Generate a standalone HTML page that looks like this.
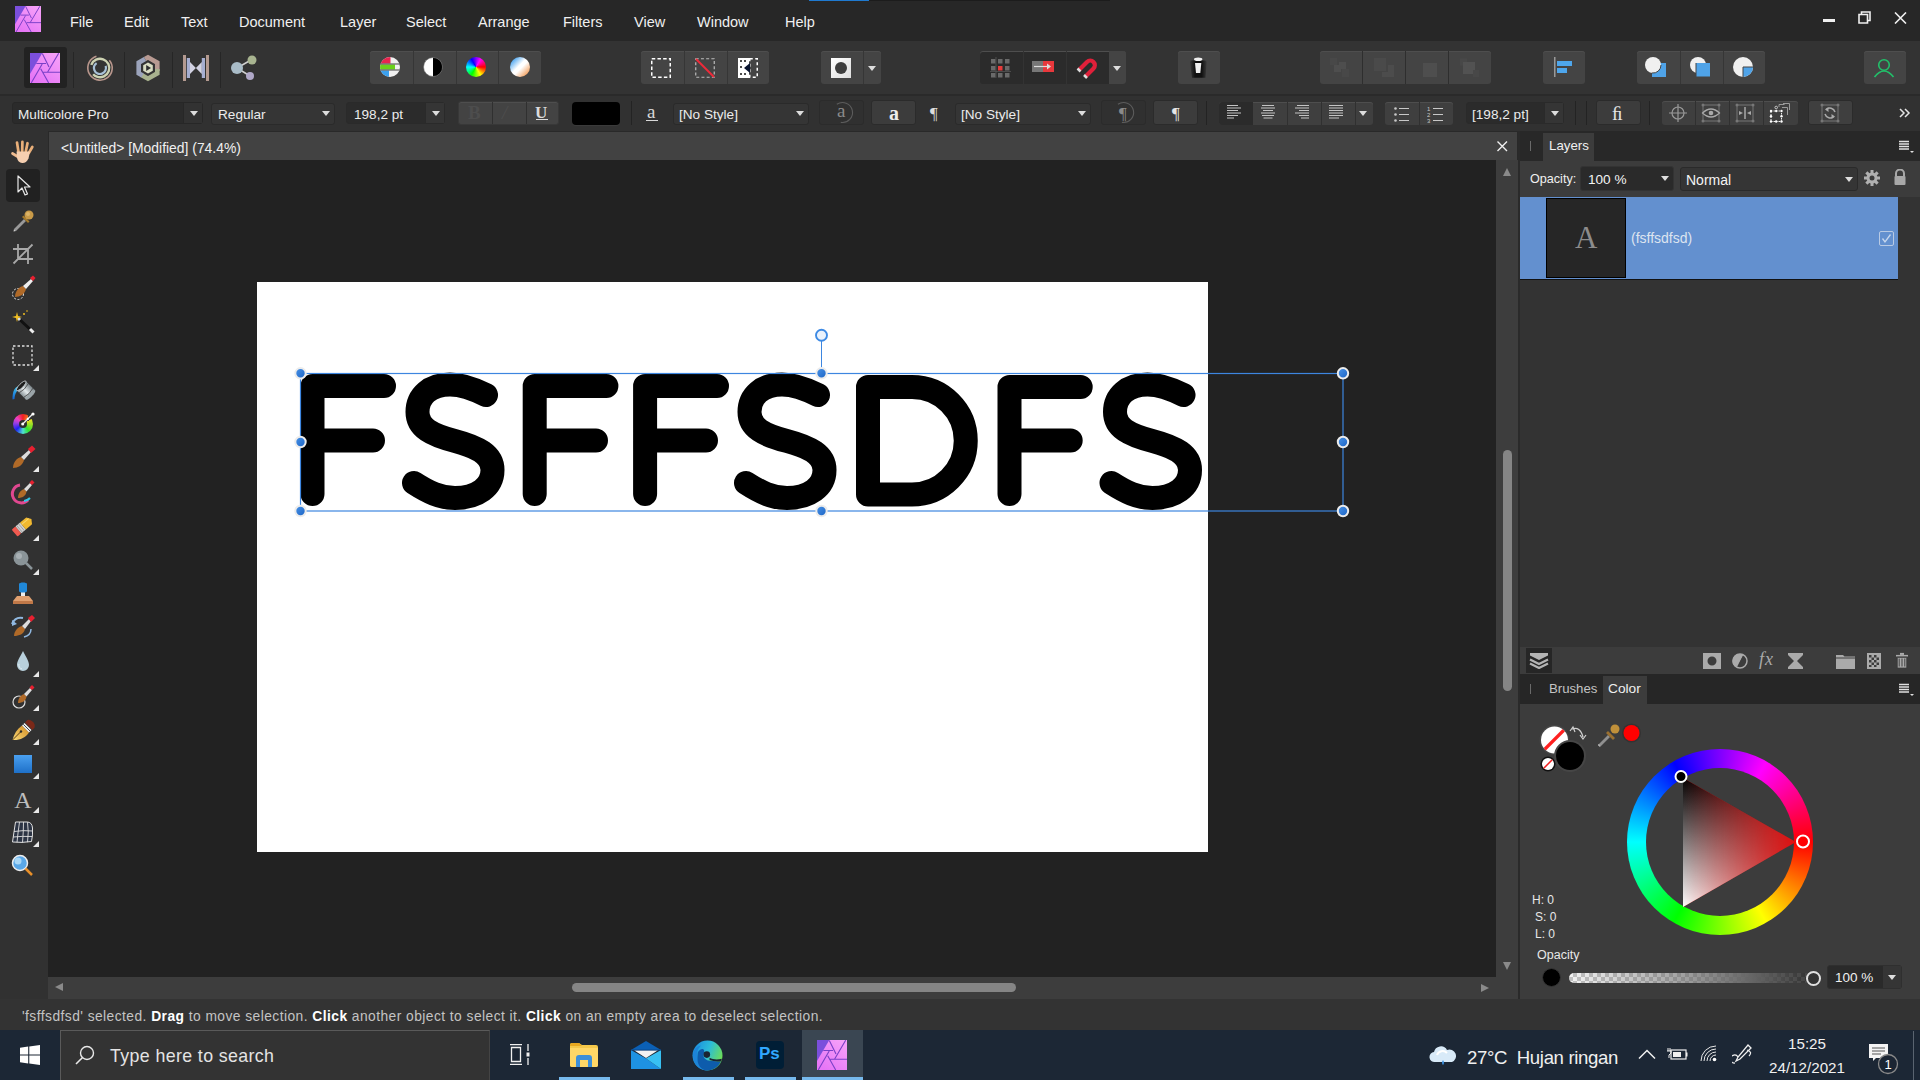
<!DOCTYPE html>
<html><head><meta charset="utf-8">
<style>
*{margin:0;padding:0;box-sizing:border-box}
html,body{width:1920px;height:1080px;overflow:hidden;background:#222;font-family:"Liberation Sans",sans-serif;color:#ddd}
.a{position:absolute}
.t{position:absolute;white-space:nowrap}
#menubar{left:0;top:0;width:1920px;height:41px;background:#272727}
#menubar .m{position:absolute;top:14px;font-size:14.5px;color:#f0f0f0}
#tb{left:0;top:41px;width:1920px;height:54px;background:#333}
#tbline{left:0;top:94px;width:1920px;height:2px;background:#2a2a2a}
#ctx{left:0;top:96px;width:1920px;height:36px;background:#313131}
#tools{left:0;top:124px;width:48px;height:875px;background:#313131}
#doctab{left:48px;top:131px;width:1470px;height:30px;background:#424242;border:1px solid #292929;border-bottom:none}
#canvas{left:48px;top:160px;width:1448px;height:817px;background:#222}
#page{left:257px;top:282px;width:951px;height:570px;background:#fff}
#vscroll{left:1496px;top:160px;width:22px;height:839px;background:#3d3d3d}
#hscroll{left:48px;top:977px;width:1470px;height:22px;background:#3d3d3d}
#status{left:0;top:999px;width:1920px;height:31px;background:#333}
#taskbar{left:0;top:1030px;width:1920px;height:50px;background:#1c2735}
#rpanel{left:1518px;top:131px;width:402px;height:868px;background:#2a2a2a}
.grp{position:absolute;background:#444;border-radius:3px;overflow:hidden;box-shadow:inset 0 1px 0 #4e4e4e}
.grp .b{position:absolute;top:0;height:100%;border-left:1px solid #363636}
.cb{position:absolute;background:#282828;border:1px solid #262626;border-radius:3px;font-size:13px;color:#e8e8e8}
.cb .dd{position:absolute;top:0;right:0;height:100%;border-left:1px solid #3a3a3a}
.arr{position:absolute;width:0;height:0;border-left:4px solid transparent;border-right:4px solid transparent;border-top:5px solid #ddd}
</style></head><body>

<!-- MENU BAR -->
<div id="menubar" class="a">
  <div class="m" style="left:70px">File</div>
  <div class="m" style="left:124px">Edit</div>
  <div class="m" style="left:181px">Text</div>
  <div class="m" style="left:239px">Document</div>
  <div class="m" style="left:340px">Layer</div>
  <div class="m" style="left:406px">Select</div>
  <div class="m" style="left:478px">Arrange</div>
  <div class="m" style="left:563px">Filters</div>
  <div class="m" style="left:634px">View</div>
  <div class="m" style="left:697px">Window</div>
  <div class="m" style="left:785px">Help</div>
</div>

<div id="tb" class="a"></div>
<div id="tbline" class="a"></div>
<!-- ROW 2 TOOLBAR -->
<div class="a" style="left:24px;top:47px;width:43px;height:41px;background:#222;border-radius:3px"></div>
<svg class="a" style="left:15px;top:6px" width="26" height="26" viewBox="0 0 30 30"><defs><linearGradient id="lg1" x1="1" y1="0" x2="0.3" y2="1"><stop offset="0" stop-color="#f7a4f9"/><stop offset="1" stop-color="#e676f6"/></linearGradient></defs><rect width="30" height="30" fill="url(#lg1)"/><path d="M0 0H12.3L0 21Z" fill="#7b4fdc"/><path d="M12.3 0.5L19 14M28.7 0.2L17.5 19.2M6.3 10.5H16M12.2 11L1.2 30M10.7 15.8L18.7 30M13.3 19.2H30" stroke="#7a40c8" stroke-width="1.1" fill="none"/></svg>
<svg class="a" style="left:30px;top:53px" width="30" height="30" viewBox="0 0 30 30"><rect width="30" height="30" fill="url(#lg1)"/><path d="M0 0H12.3L0 21Z" fill="#7b4fdc"/><path d="M12.3 0.5L19 14M28.7 0.2L17.5 19.2M6.3 10.5H16M12.2 11L1.2 30M10.7 15.8L18.7 30M13.3 19.2H30" stroke="#7a40c8" stroke-width="1.1" fill="none"/></svg>
<div class="a" style="left:73px;top:52px;width:1px;height:36px;background:#262626"></div>
<div class="a" style="left:124px;top:52px;width:1px;height:36px;background:#262626"></div>
<div class="a" style="left:172px;top:52px;width:1px;height:36px;background:#262626"></div>
<div class="a" style="left:220px;top:52px;width:1px;height:36px;background:#262626"></div>
<svg class="a" style="left:86px;top:54px" width="28" height="28" viewBox="0 0 28 28"><circle cx="14" cy="14" r="12.2" fill="none" stroke="#b8968c" stroke-width="1.6" stroke-dasharray="62 15" transform="rotate(-40 14 14)"/><circle cx="14" cy="14" r="9.3" fill="none" stroke="#cdd2b2" stroke-width="2.4" stroke-dasharray="48 10" transform="rotate(200 14 14)"/><circle cx="14" cy="14" r="6" fill="none" stroke="#a8c0d6" stroke-width="2.2" stroke-dasharray="26 12" transform="rotate(-20 14 14)"/></svg>
<svg class="a" style="left:134px;top:54px" width="28" height="28" viewBox="-14 -14 28 28"><g fill="none" stroke-width="4.6" stroke-linejoin="miter"><path d="M-3 -9L0 -10.7L9.3 -5.35V3" stroke="#b89a92"/><path d="M9.3 1V5.35L0 10.7L-7 6.7" stroke="#a8b28e"/><path d="M-5.5 7.6L-9.3 5.35V-5.35L-3 -9" stroke="#9ba3bb"/></g><path d="M0 -5.5L4.8 -2.75V2.75L0 5.5L-4.8 2.75V-2.75Z" fill="#d8dcc2"/><path d="M-1.8 -3L3 0L-1.8 3Z" fill="#2e2e2e"/></svg>
<svg class="a" style="left:183px;top:55px" width="26" height="26" viewBox="0 0 26 26"><rect x="0" y="0" width="3" height="26" fill="#b49a90"/><rect x="23" y="0" width="3" height="26" fill="#b49a90"/><rect x="3.8" y="3" width="3.2" height="20" fill="#a6aed0"/><rect x="18.8" y="3" width="3.2" height="20" fill="#a6aed0"/><path d="M7 7L12.9 13L7 19ZM18.8 7L12.9 13L18.8 19Z" fill="#d2d2e2"/></svg>
<svg class="a" style="left:231px;top:55px" width="26" height="26" viewBox="0 0 26 26"><path d="M6 13L20 5M6 13L19 21" stroke="#cfcfcf" stroke-width="1.5"/><circle cx="6" cy="13" r="6" fill="#a9bcc8"/><circle cx="21" cy="5" r="4.5" fill="#a8b490"/><circle cx="19" cy="21" r="4" fill="#b0a8c8"/></svg>

<div class="grp" style="left:370px;top:51px;width:171px;height:33px">
 <div class="b" style="left:43px;width:0"></div><div class="b" style="left:86px;width:0"></div><div class="b" style="left:128px;width:0"></div>
</div>
<svg class="a" style="left:380px;top:57px" width="20" height="20" viewBox="0 0 20 20"><defs><clipPath id="c20"><circle cx="10" cy="10" r="10"/></clipPath></defs><g clip-path="url(#c20)"><rect width="20" height="20" fill="#f0f0f0"/><rect x="0" y="0" width="10.5" height="6.5" fill="#e8244e"/><rect x="0" y="7.5" width="15" height="5" fill="#6ad11a"/><rect x="0" y="13.5" width="9" height="7" fill="#3ba0ee"/><rect x="0" y="6.5" width="20" height="1" fill="#444"/><rect x="0" y="12.5" width="20" height="1" fill="#444"/></g></svg>
<svg class="a" style="left:423px;top:57px" width="20" height="20" viewBox="0 0 20 20"><circle cx="10" cy="10" r="9.5" fill="#fff"/><path d="M10 0.5A9.5 9.5 0 0 1 10 19.5Z" fill="#000"/><circle cx="10" cy="10" r="9.5" fill="none" stroke="#666" stroke-width="0.6"/></svg>
<div class="a" style="left:466px;top:57px;width:20px;height:20px;border-radius:50%;background:conic-gradient(from 90deg,#f00,#ff0 60deg,#0f0 120deg,#0ff 180deg,#00f 240deg,#f0f 300deg,#f00)"></div>
<div class="a" style="left:510px;top:57px;width:20px;height:20px;border-radius:50%;background:linear-gradient(135deg,#3a9df0 10%,#fff 45%,#fff 55%,#f08a3a 95%)"></div>

<div class="grp" style="left:641px;top:51px;width:128px;height:33px">
 <div class="b" style="left:43px;width:0"></div><div class="b" style="left:86px;width:0"></div>
</div>
<svg class="a" style="left:651px;top:58px" width="20" height="20" viewBox="0 0 20 20"><rect x="0.75" y="0.75" width="18.5" height="18.5" fill="none" stroke="#fff" stroke-width="1.5" stroke-dasharray="3.5 2.2"/></svg>
<svg class="a" style="left:695px;top:58px" width="20" height="20" viewBox="0 0 20 20"><rect x="0.75" y="0.75" width="18.5" height="18.5" fill="none" stroke="#bbb" stroke-width="1.2" stroke-dasharray="3 2.2"/><path d="M1 1L19 19" stroke="#ee2a3a" stroke-width="2"/></svg>
<svg class="a" style="left:738px;top:58px" width="20" height="20" viewBox="0 0 20 20"><rect x="0" y="0" width="11" height="20" fill="#fff"/><rect x="11.75" y="0.75" width="7.5" height="18.5" fill="none" stroke="#fff" stroke-width="1.5" stroke-dasharray="3 2.5"/><path d="M2 3h2M2 9h2M2 16h2M6 3h2M6 16h2" stroke="#111" stroke-width="1.5"/><path d="M12 5L6 10L12 15Z" fill="#0a1530"/></svg>

<div class="grp" style="left:821px;top:51px;width:60px;height:33px"><div class="b" style="left:42px;width:0"></div></div>
<div class="a" style="left:831px;top:58px;width:20px;height:20px;background:linear-gradient(135deg,#fff,#ddd)"></div>
<div class="a" style="left:835px;top:62px;width:12px;height:12px;border-radius:50%;background:#3d3d3d"></div>
<div class="arr" style="left:868px;top:66px"></div>

<div class="grp" style="left:980px;top:51px;width:146px;height:33px;background:#2b2b2b">
 <div class="b" style="left:43px;width:0;border-color:#333"></div><div class="b" style="left:86px;width:0;border-color:#333"></div>
 <div class="a" style="left:129px;top:0;width:17px;height:33px;background:#444"></div>
</div>
<svg class="a" style="left:990px;top:57px" width="22" height="21" viewBox="0 0 22 21"><g fill="#6a6a6a"><rect x="1" y="2" width="4.5" height="4.5"/><rect x="8" y="2" width="4.5" height="4.5"/><rect x="15" y="2" width="4.5" height="4.5"/><rect x="1" y="9" width="4.5" height="4.5"/><rect x="15" y="9" width="4.5" height="4.5"/><rect x="1" y="16" width="4.5" height="4.5"/><rect x="8" y="16" width="4.5" height="4.5"/><rect x="15" y="16" width="4.5" height="4.5"/></g><rect x="8" y="9" width="4.5" height="4.5" fill="#e83a3a"/><path d="M6 0V21M0 14.5H21" stroke="#555" stroke-width="0.8"/></svg>
<svg class="a" style="left:1032px;top:61px" width="22" height="11" viewBox="0 0 22 11"><rect x="0" y="0" width="11" height="11" fill="#777"/><rect x="11" y="0" width="11" height="11" fill="#e8383c"/><path d="M2 5.5H16" stroke="#ddd" stroke-width="1.2"/><path d="M15 2.5L19 5.5L15 8.5Z" fill="#ddd"/></svg>
<svg class="a" style="left:1076px;top:57px" width="22" height="22" viewBox="0 0 22 22"><path d="M3 13L11 5A4.5 4.5 0 0 1 17.5 11.5L9.5 19.5" fill="none" stroke="#e0203a" stroke-width="4.2"/><path d="M1.5 11.5L4.5 14.5M8 18L11 21" stroke="#ddd" stroke-width="2.5"/></svg>
<div class="arr" style="left:1113px;top:66px"></div>

<div class="grp" style="left:1178px;top:51px;width:42px;height:33px"></div>
<svg class="a" style="left:1188px;top:56px" width="20" height="24" viewBox="0 0 20 24"><defs><linearGradient id="txg" x1="0" y1="0" x2="1" y2="0"><stop offset="0" stop-color="#3a3a3a"/><stop offset="0.3" stop-color="#111"/><stop offset="0.7" stop-color="#111"/><stop offset="1" stop-color="#3a3a3a"/></linearGradient></defs><path d="M2 6Q2 4.5 4 4.5H16.5Q18.7 4.5 18.7 6L17.5 21.7H4Z" fill="url(#txg)"/><ellipse cx="10.2" cy="3.3" rx="4.2" ry="1.8" fill="#eeeeee"/><rect x="7.5" y="5.2" width="5.5" height="1.6" fill="#0a0a0a"/><path d="M7 7H13.3L12.3 17H8Z" fill="#f0f0f0"/></svg>

<div class="grp" style="left:1320px;top:51px;width:171px;height:33px;background:#444">
 <div class="b" style="left:42px;width:0;border-color:#2e2e2e"></div><div class="b" style="left:85px;width:0;border-color:#2e2e2e"></div><div class="b" style="left:128px;width:0;border-color:#2e2e2e"></div>
</div>
<svg class="a" style="left:1330px;top:57px" width="22" height="22" viewBox="0 0 22 22"><rect x="0" y="1" width="7" height="7" fill="#484848"/><rect x="9" y="5" width="7" height="7" fill="#4e4e4e"/><rect x="4" y="8" width="7" height="7" fill="#4e4e4e"/><rect x="12" y="12" width="7" height="8" fill="#484848"/></svg>
<svg class="a" style="left:1374px;top:57px" width="22" height="22" viewBox="0 0 22 22"><rect x="0" y="1" width="12" height="13" fill="#4a4a4a"/><path d="M14 8H20V20H8V15H14Z" fill="#4c4c4c"/></svg>
<svg class="a" style="left:1417px;top:57px" width="22" height="22" viewBox="0 0 22 22"><rect x="0" y="1" width="12" height="12" fill="#444"/><rect x="6" y="6" width="14" height="14" fill="#4e4e4e"/></svg>
<svg class="a" style="left:1460px;top:57px" width="22" height="22" viewBox="0 0 22 22"><rect x="0" y="1.5" width="7" height="7" fill="#484848"/><rect x="3" y="5" width="12" height="12" fill="#525252"/><rect x="13" y="13" width="6" height="7" fill="#484848"/></svg>

<div class="grp" style="left:1543px;top:51px;width:42px;height:33px"></div>
<svg class="a" style="left:1553px;top:57px" width="22" height="21" viewBox="0 0 22 21"><rect x="1" y="0" width="1.5" height="20" fill="#999"/><rect x="4" y="4" width="15" height="5" fill="#4ea6ec"/><rect x="4" y="11" width="10" height="5" fill="#4ea6ec"/></svg>

<div class="grp" style="left:1637px;top:51px;width:128px;height:33px">
 <div class="b" style="left:43px;width:0"></div><div class="b" style="left:86px;width:0"></div>
</div>
<svg class="a" style="left:1645px;top:57px" width="22" height="22" viewBox="0 0 22 22"><rect x="7" y="6" width="14" height="14" fill="#4fa3e8"/><circle cx="8" cy="8" r="8" fill="#f0f0f0"/><path d="M7 16A8 8 0 0 0 16 8" stroke="#444" stroke-width="1" fill="none"/></svg>
<svg class="a" style="left:1690px;top:57px" width="22" height="22" viewBox="0 0 22 22"><circle cx="8" cy="8" r="8" fill="#f0f0f0"/><rect x="6" y="6" width="14" height="14" fill="#4fa3e8"/><path d="M6 6V20H20" stroke="#444" stroke-width="1" fill="none"/></svg>
<svg class="a" style="left:1733px;top:57px" width="22" height="22" viewBox="0 0 22 22"><circle cx="10" cy="10" r="10" fill="#f0f0f0"/><path d="M10 10H20A10 10 0 0 1 10 20Z" fill="#4fa3e8"/><path d="M10 20V10H20" stroke="#444" stroke-width="1" fill="none"/></svg>

<div class="grp" style="left:1864px;top:51px;width:42px;height:33px"></div>
<svg class="a" style="left:1873px;top:58px" width="22" height="20" viewBox="0 0 22 20"><circle cx="11" cy="7" r="5.3" fill="none" stroke="#22c06a" stroke-width="1.6"/><path d="M1.5 19Q11 7 20.5 19" fill="none" stroke="#22c06a" stroke-width="1.6"/></svg>

<div id="ctx" class="a"></div>

<!-- ROW 3 CONTEXT -->

<div class="cb" style="left:12px;top:102px;width:191px;height:22px;background:#2b2b2b;border-color:#272727"><div class="dd" style="width:19px;background:#323232;border-color:#272727"></div></div>
<div class="t" style="left:18px;top:107px;font-size:13.6px;color:#ececec">Multicolore Pro</div>
<div class="arr" style="left:190px;top:111px"></div>
<div class="cb" style="left:211px;top:103px;width:124px;height:22px;background:#353535;border-color:#2a2a2a"></div>
<div class="t" style="left:218px;top:107px;font-size:13.6px;color:#ececec">Regular</div>
<div class="arr" style="left:322px;top:111px"></div>
<div class="cb" style="left:346px;top:102px;width:99px;height:22px;background:#2b2b2b;border-color:#2a2a2a"><div class="dd" style="width:19px;background:#353535;border-color:#2a2a2a"></div></div>
<div class="t" style="left:354px;top:107px;font-size:13.6px;color:#ececec">198,2 pt</div>
<div class="arr" style="left:432px;top:111px"></div>

<div class="grp" style="left:458px;top:101px;width:101px;height:24px;background:#434343;border:1px solid #383838">
 <div class="b" style="left:33px;width:0;border-color:#303030"></div><div class="b" style="left:67px;width:0;border-color:#303030"></div>
</div>
<div class="t" style="left:468px;top:102px;font-family:'Liberation Serif',serif;font-weight:bold;font-size:19px;color:#4d4d4d">B</div>
<div class="t" style="left:502px;top:102px;font-family:'Liberation Serif',serif;font-style:italic;font-size:19px;color:#4d4d4d">/</div>
<div class="t" style="left:535px;top:103px;font-family:'Liberation Serif',serif;font-weight:bold;font-size:17px;color:#dcdcdc">U</div>
<div class="a" style="left:536px;top:119px;width:12px;height:1px;background:#dcdcdc"></div>
<div class="a" style="left:572px;top:102px;width:48px;height:23px;background:#000;border-radius:4px;box-shadow:0 1px 0 #3a3a3a"></div>
<div class="a" style="left:631px;top:101px;width:1px;height:24px;background:#232323"></div>
<div class="t" style="left:647px;top:101px;font-family:'Liberation Serif',serif;font-size:19px;color:#d8d8d8">a</div>
<div class="a" style="left:646px;top:120px;width:12px;height:1px;background:#d8d8d8"></div>

<div class="cb" style="left:673px;top:103px;width:136px;height:22px;background:#353535;border-color:#2a2a2a"></div>
<div class="t" style="left:679px;top:107px;font-size:13.6px;color:#ececec">[No Style]</div>
<div class="arr" style="left:796px;top:111px"></div>
<div class="a" style="left:819px;top:100px;width:45px;height:25px;background:#303030;border-radius:3px;border:1px solid #2b2b2b"></div>
<div class="t" style="left:837px;top:100px;font-family:'Liberation Serif',serif;font-size:19px;color:#8a8a8a">a</div>
<svg class="a" style="left:0;top:0" width="1200" height="130" viewBox="0 0 1200 130"><path d="M836.8 104.3A10 10 0 1 1 840.8 122.35" fill="none" stroke="#5c5c5c" stroke-width="1.1"/></svg>
<div class="a" style="left:871px;top:100px;width:45px;height:25px;background:#3c3c3c;border-radius:3px;border:1px solid #2b2b2b"></div>
<div class="t" style="left:889px;top:102px;font-family:'Liberation Serif',serif;font-weight:bold;font-size:20px;color:#ececec">a</div>
<div class="t" style="left:930px;top:104px;font-family:'Liberation Serif',serif;font-size:17px;color:#dcdcdc">&#182;</div>

<div class="cb" style="left:955px;top:103px;width:136px;height:22px;background:#353535;border-color:#2a2a2a"></div>
<div class="t" style="left:961px;top:107px;font-size:13.6px;color:#ececec">[No Style]</div>
<div class="arr" style="left:1078px;top:111px"></div>
<div class="a" style="left:1101px;top:100px;width:45px;height:25px;background:#303030;border-radius:3px;border:1px solid #2b2b2b"></div>
<div class="t" style="left:1119px;top:104px;font-family:'Liberation Serif',serif;font-size:17px;color:#8a8a8a">&#182;</div>
<svg class="a" style="left:1100px;top:95px" width="50" height="35" viewBox="1100 95 50 35"><path d="M1117.9 104.3A10 10 0 1 1 1121.9 122.35" fill="none" stroke="#5c5c5c" stroke-width="1.1"/></svg>
<div class="a" style="left:1153px;top:100px;width:45px;height:25px;background:#3c3c3c;border-radius:3px;border:1px solid #2b2b2b"></div>
<div class="t" style="left:1172px;top:104px;font-family:'Liberation Serif',serif;font-size:17px;color:#e6e6e6">&#182;</div>
<div class="a" style="left:1206px;top:101px;width:1px;height:24px;background:#232323"></div>

<div class="grp" style="left:1219px;top:102px;width:154px;height:23px;background:#3f3f3f">
 <div class="a" style="left:0;top:0;width:34px;height:23px;background:#2b2b2b"></div>
 <div class="b" style="left:68px;width:0;border-color:#303030"></div><div class="b" style="left:102px;width:0;border-color:#303030"></div><div class="b" style="left:136px;width:0;border-color:#303030"></div>
</div>
<svg class="a" style="left:1226px;top:102px" width="20" height="20" viewBox="0 0 20 20"><g stroke="#c4c4c4" stroke-width="1.1"><path d="M1 3.5h11M1 6h14M1 8.5h11M1 11h14M1 13.5h11M1 16h7"/></g></svg>
<svg class="a" style="left:1259px;top:102px" width="20" height="20" viewBox="0 0 20 20"><g stroke="#c4c4c4" stroke-width="1.1"><path d="M3 3.5h12M2 6h14M4 8.5h10M2 11h14M3 13.5h12M4.5 16h9"/></g></svg>
<svg class="a" style="left:1293px;top:102px" width="20" height="20" viewBox="0 0 20 20"><g stroke="#c4c4c4" stroke-width="1.1"><path d="M4 3.5h12M2 6h14M6 8.5h10M2 11h14M6 13.5h10M8 16h8"/></g></svg>
<svg class="a" style="left:1327px;top:102px" width="20" height="20" viewBox="0 0 20 20"><g stroke="#c4c4c4" stroke-width="1.1"><path d="M2 3.5h14M2 6h14M2 8.5h14M2 11h14M2 13.5h14M2 16h10"/></g></svg>
<div class="arr" style="left:1359px;top:111px"></div>

<div class="grp" style="left:1385px;top:102px;width:68px;height:23px;background:#3f3f3f"><div class="b" style="left:34px;width:0;border-color:#303030"></div></div>
<svg class="a" style="left:1393px;top:104px" width="20" height="20" viewBox="0 0 20 20"><g fill="#c8c8c8"><circle cx="2.5" cy="4.5" r="1.3"/><circle cx="2.5" cy="10.5" r="1.3"/><circle cx="2.5" cy="16.5" r="1.3"/></g><g stroke="#c8c8c8" stroke-width="1.2"><path d="M6 4.5h10M6 10.5h10M6 16.5h10"/></g></svg>
<svg class="a" style="left:1427px;top:104px" width="20" height="20" viewBox="0 0 20 20"><g fill="#c8c8c8" font-family="Liberation Sans" font-size="6"><text x="0" y="7">1</text><text x="0" y="13">2</text><text x="0" y="19">3</text></g><g stroke="#c8c8c8" stroke-width="1.2"><path d="M6 4.5h10M6 10.5h10M6 16.5h10"/></g></svg>

<div class="cb" style="left:1466px;top:102px;width:98px;height:22px;background:#2b2b2b;border-color:#2a2a2a"><div class="dd" style="width:19px;background:#353535;border-color:#2a2a2a"></div></div>
<div class="t" style="left:1472px;top:107px;font-size:13.6px;color:#ececec">[198,2 pt]</div>
<div class="arr" style="left:1551px;top:111px"></div>
<div class="a" style="left:1575px;top:101px;width:1px;height:24px;background:#232323"></div>
<div class="a" style="left:1586px;top:101px;width:1px;height:24px;background:#232323"></div>
<div class="a" style="left:1596px;top:100px;width:45px;height:25px;background:#3c3c3c;border-radius:3px;border:1px solid #2b2b2b"></div>
<div class="t" style="left:1612px;top:103px;font-family:'Liberation Serif',serif;font-size:19px;color:#e6e6e6">&#xFB01;</div>
<div class="a" style="left:1649px;top:101px;width:1px;height:24px;background:#232323"></div>

<div class="grp" style="left:1662px;top:101px;width:136px;height:24px;background:#3f3f3f">
 <div class="b" style="left:33px;width:0;border-color:#303030"></div><div class="b" style="left:67px;width:0;border-color:#303030"></div><div class="b" style="left:101px;width:0;border-color:#303030"></div>
</div>
<svg class="a" style="left:1668px;top:103px" width="20" height="20" viewBox="0 0 20 20"><circle cx="10" cy="10" r="6" fill="none" stroke="#999" stroke-width="1.2"/><path d="M10 1V19M1 10H19" stroke="#999" stroke-width="1.2"/></svg>
<svg class="a" style="left:1701px;top:103px" width="20" height="20" viewBox="0 0 20 20"><rect x="2" y="2" width="16" height="16" fill="none" stroke="#777" stroke-width="1"/><g fill="#777"><circle cx="2" cy="2" r="1.5"/><circle cx="18" cy="2" r="1.5"/><circle cx="2" cy="18" r="1.5"/><circle cx="18" cy="18" r="1.5"/></g><path d="M1.5 10Q10 2 18.5 10Q10 18 1.5 10Z" fill="#3f3f3f" stroke="#aaa" stroke-width="1.2"/><circle cx="10" cy="10" r="2.3" fill="#aaa"/></svg>
<svg class="a" style="left:1735px;top:103px" width="20" height="20" viewBox="0 0 20 20"><rect x="2" y="2" width="16" height="16" fill="none" stroke="#777" stroke-width="1"/><g fill="#777"><circle cx="2" cy="2" r="1.5"/><circle cx="18" cy="2" r="1.5"/><circle cx="2" cy="18" r="1.5"/><circle cx="18" cy="18" r="1.5"/></g><path d="M10 4V16" stroke="#aaa" stroke-width="1.5"/><path d="M4 8L8 10L4 12ZM16 8L12 10L16 12Z" fill="#aaa"/></svg>
<svg class="a" style="left:1768px;top:101px" width="24" height="24" viewBox="0 0 24 24"><path d="M11 6V3.5H16.5M14 6.5H19.5V12M19.5 10V14" fill="none" stroke="#9a9a9a" stroke-width="1"/><path d="M15 2.5H21.5V9" fill="none" stroke="#9a9a9a" stroke-width="1"/><rect x="3" y="10" width="10.5" height="10.5" fill="none" stroke="#f0f0f0" stroke-width="1" stroke-dasharray="1.5 1"/><g fill="#fff"><circle cx="3" cy="10" r="1.2"/><circle cx="13.5" cy="10" r="1.2"/><circle cx="3" cy="20.5" r="1.2"/><circle cx="13.5" cy="20.5" r="1.2"/><circle cx="8.2" cy="10" r="1.2"/><circle cx="8.2" cy="20.5" r="1.2"/><circle cx="3" cy="15.2" r="1.2"/><circle cx="13.5" cy="15.2" r="1.2"/></g><circle cx="8.2" cy="6.5" r="1.3" fill="none" stroke="#ddd" stroke-width="0.8"/></svg>

<div class="a" style="left:1808px;top:100px;width:45px;height:25px;background:#3f3f3f;border-radius:3px;border:1px solid #2b2b2b"></div>
<svg class="a" style="left:1820px;top:103px" width="21" height="20" viewBox="0 0 21 20"><rect x="2" y="2" width="16" height="16" fill="none" stroke="#777" stroke-width="1"/><g fill="#777"><circle cx="2" cy="2" r="1.5"/><circle cx="18" cy="2" r="1.5"/><circle cx="2" cy="18" r="1.5"/><circle cx="18" cy="18" r="1.5"/></g><path d="M15 9A5.5 5.5 0 0 0 6 6.5M5 11A5.5 5.5 0 0 0 14 13.5" fill="none" stroke="#aaa" stroke-width="1.5"/><path d="M8.5 4L5 6.5L8.5 9ZM11.5 11L15 13.5L11.5 16Z" fill="#aaa"/></svg>
<svg class="a" style="left:1899px;top:108px" width="12" height="10" viewBox="0 0 12 10"><path d="M1 1L5 5L1 9M6 1L10 5L6 9" fill="none" stroke="#e4e4e4" stroke-width="1.5"/></svg>
<div id="tools" class="a"></div>
<div class="a" style="left:6px;top:169px;width:34px;height:33px;background:#212121;border-radius:4px"></div>
<svg class="a" style="left:10px;top:140px" width="26" height="26" viewBox="0 0 26 26"><g fill="none" stroke="#eab07a" stroke-linecap="round" stroke-width="2.7"><path d="M8.5 12L7 2.5M12.2 11.5L12.4 1.8M15.8 11.5L17.5 3.2M18.8 13L22.3 7"/><path d="M7.5 16.5L2.5 13.5" stroke="#f0bc90"/></g><path d="M6.5 11.5H20L18.5 18.5Q16 23.5 12 23Q8 22.5 7 18Z" fill="#f6cfb0"/></svg>
<svg class="a" style="left:10px;top:173px" width="26" height="26" viewBox="0 0 26 26"><path d="M8 3V19L12 15L15 22L17.5 21L14.5 14H20Z" fill="#222" stroke="#e8e8e8" stroke-width="1.2" stroke-linejoin="round"/></svg>
<svg class="a" style="left:10px;top:207px" width="26" height="26" viewBox="0 0 26 26"><path d="M4 22L14 12L16 14L6 24Z" fill="#999"/><path d="M4 22L6 24L3.5 24.5Z" fill="#ccc"/><path d="M12 10L18 16L19.5 14.5L13.5 8.5Z" fill="#a57a2a"/><circle cx="19" cy="8" r="4.5" fill="#c89a48"/><circle cx="18" cy="7" r="2" fill="#dcb468"/></svg>
<svg class="a" style="left:10px;top:241px" width="26" height="26" viewBox="0 0 26 26"><path d="M8 3V18H23M3 8H18V23M3.5 22.5L22.5 3.5" fill="none" stroke="#a8a8a8" stroke-width="1.8"/></svg>
<svg class="a" style="left:10px;top:275px" width="26" height="26" viewBox="0 0 26 26"><circle cx="8" cy="19" r="5.5" fill="none" stroke="#ddd" stroke-width="1" stroke-dasharray="2 1.5"/><path d="M5 22C5 16 9 12 13 11L16 14C15 19 10 22 5 22Z" fill="#b06a28"/><path d="M13 11L21 4L23 6L16 14Z" fill="#eee"/><path d="M20 3L23 0.5L25.5 3L23 6Z" fill="#e82030"/></svg>
<svg class="a" style="left:10px;top:309px" width="26" height="26" viewBox="0 0 26 26"><path d="M8 9L23 23" stroke="#111" stroke-width="3"/><path d="M20 20L23.5 23.5" stroke="#eee" stroke-width="3"/><path d="M8 9L10 11" stroke="#ddd" stroke-width="3"/><path d="M7 3L8 7L12 8L8 9L7 13L6 9L2 8L6 7Z" fill="#f4c020"/><circle cx="14" cy="5" r="1" fill="#f4c020"/><circle cx="17" cy="2" r="0.8" fill="#f4c020"/></svg>
<svg class="a" style="left:10px;top:343px" width="26" height="26" viewBox="0 0 26 26"><rect x="3" y="3" width="19" height="19" fill="none" stroke="#e0e0e0" stroke-width="1.3" stroke-dasharray="2.5 2"/></svg>
<svg class="a" style="left:10px;top:377px" width="26" height="26" viewBox="0 0 26 26"><defs><linearGradient id="bkg" x1="0" y1="0" x2="1" y2="0"><stop offset="0" stop-color="#8a9498"/><stop offset="0.45" stop-color="#e4eaec"/><stop offset="1" stop-color="#7a8488"/></linearGradient><linearGradient id="bpg" x1="0" y1="0" x2="0" y2="1"><stop offset="0" stop-color="#40c8f0"/><stop offset="1" stop-color="#1060d0"/></linearGradient></defs><path d="M10 9C5 9.5 2.5 13 2.5 22.5L4.5 22C5 16.5 6.5 13.5 10.5 11.5Z" fill="url(#bpg)"/><g transform="translate(15.5 13) rotate(-45)"><rect x="-6.5" y="-6" width="13" height="13" fill="url(#bkg)"/><ellipse cx="0" cy="7" rx="6.5" ry="2" fill="#9aa4a8"/><ellipse cx="0" cy="-6" rx="6.5" ry="2" fill="#1e1e1e" stroke="#cfd6d8" stroke-width="0.8"/><path d="M-6.5 -2.5Q0 -0.5 6.5 -2.5M-6.5 4Q0 6 6.5 4" stroke="#333" stroke-width="0.7" fill="none"/></g></svg>
<div class="a" style="left:13px;top:414px;width:20px;height:20px;border-radius:50%;background:conic-gradient(#f02020 0deg,#f07020 35deg,transparent 36deg,transparent 58deg,#e8e020 60deg,#30e030 140deg,#50e0d0 180deg,#2020f0 230deg,#a040e0 280deg,#f040c0 315deg,#f02020 360deg)"></div><div class="a" style="left:19px;top:420px;width:8px;height:8px;border-radius:50%;background:#2e2e2e"></div><svg class="a" style="left:10px;top:411px" width="26" height="26" viewBox="0 0 26 26"><path d="M12.7 13L23 2.8" stroke="#f0f0f0" stroke-width="1.3"/><circle cx="12.7" cy="13" r="1.5" fill="#fff"/><circle cx="17.8" cy="7.9" r="1.1" fill="#fff"/><circle cx="23" cy="3" r="1.6" fill="#fff"/></svg>
<svg class="a" style="left:10px;top:445px" width="26" height="26" viewBox="0 0 26 26"><path d="M3 23C3 17 7 13 11 12L14 15C13 20 8 23 3 23Z" fill="#b06a28"/><path d="M11 12L19 5L21 7L14 15Z" fill="#ddd"/><path d="M18 4L22 0.5L25.5 4L21 8Z" fill="#e82030"/></svg>
<svg class="a" style="left:10px;top:479px" width="26" height="26" viewBox="0 0 26 26"><path d="M10 6A9 9 0 1 0 18 21" fill="none" stroke="#e04890" stroke-width="3"/><path d="M14 22A9 9 0 0 0 20 19" fill="none" stroke="#30c8e8" stroke-width="2"/><path d="M8 19C8 14 11 11 14 10L16.5 12.5C16 17 12 19 8 19Z" fill="#b06a28"/><path d="M14 10L20 4L22 6L16.5 12.5Z" fill="#ddd"/><path d="M19.5 3.5L22 1L24.5 3.5L22 6Z" fill="#e82030"/></svg>
<svg class="a" style="left:10px;top:513px" width="26" height="26" viewBox="0 0 26 26"><g transform="rotate(-40 13 13)"><rect x="2" y="8.5" width="5" height="9" rx="1" fill="#f05a50"/><rect x="7" y="8.5" width="6" height="9" fill="#d0d0d0"/><path d="M8.5 8.5V17.5M11 8.5V17.5" stroke="#999" stroke-width="0.8"/><path d="M13 8.5H21L24 13L21 17.5H13Z" fill="#f0b830"/><path d="M13 11H22" stroke="#f8d870" stroke-width="1"/></g></svg>
<svg class="a" style="left:10px;top:548px" width="26" height="26" viewBox="0 0 26 26"><circle cx="11" cy="10" r="7.5" fill="#8a9498"/><circle cx="9" cy="8" r="3" fill="#a8b0b4"/><path d="M16 15L22 21" stroke="#8a9498" stroke-width="2.5"/></svg>
<svg class="a" style="left:10px;top:581px" width="26" height="26" viewBox="0 0 26 26"><path d="M3 20L7 15H19L23 20Z" fill="#e0a070"/><rect x="3" y="20" width="20" height="3" fill="#c07848"/><path d="M11 15V11H15V15Z" fill="#eee"/><path d="M9 3C9 1 17 1 17 3V10C17 12 9 12 9 10Z" fill="#2088d8"/></svg>
<svg class="a" style="left:10px;top:614px" width="26" height="26" viewBox="0 0 26 26"><path d="M2 10C4 5 8 3 13 4" fill="none" stroke="#90b8e0" stroke-width="2"/><path d="M2 6L2 12L7 10Z" fill="#90b8e0"/><path d="M21 15C21 19 18 22 14 23" fill="none" stroke="#90b8e0" stroke-width="1.5"/><path d="M4 22C4 17 8 13 12 12L15 15C14 20 9 22 4 22Z" fill="#b06a28"/><path d="M12 12L19 5L21 7L15 15Z" fill="#ddd"/><path d="M18 4L22 1L25 4L21 8Z" fill="#e82030"/></svg>
<svg class="a" style="left:10px;top:649px" width="26" height="26" viewBox="0 0 26 26"><path d="M13 2C10 8 7 12 7 16A6 6 0 0 0 19 16C19 12 16 8 13 2Z" fill="#b8d0dc"/><path d="M9 15A4 4 0 0 0 12 20" stroke="#e0eef4" stroke-width="1" fill="none"/></svg>
<svg class="a" style="left:10px;top:684px" width="26" height="26" viewBox="0 0 26 26"><circle cx="9" cy="18" r="6" fill="none" stroke="#ddd" stroke-width="1.2"/><path d="M8 19C8 14 11 11 14 10L16.5 12.5C16 17 12 19 8 19Z" fill="#b06a28"/><path d="M14 10L20 4L22 6L16.5 12.5Z" fill="#ddd"/><path d="M19.5 3.5L22 1L24.5 3.5L22 6Z" fill="#e82030"/></svg>
<svg class="a" style="left:10px;top:718px" width="26" height="26" viewBox="0 0 26 26"><defs><linearGradient id="nbg" x1="0" y1="1" x2="1" y2="0"><stop offset="0" stop-color="#f8d878"/><stop offset="1" stop-color="#d08a20"/></linearGradient></defs><path d="M2.5 22C4 16 7 11 12 7.5L19 14.5C15.5 19.5 10 22.5 2.5 22Z" fill="url(#nbg)"/><path d="M2.5 22L10.5 14" stroke="#4a3010" stroke-width="0.9"/><circle cx="11" cy="13.5" r="1.2" fill="#2a2a2a"/><path d="M12 7.5L19 14.5L21.5 12L14.5 5Z" fill="#f0f0f0"/><path d="M13.3 6.3L20.3 13.3M15.5 4.5L22.5 11.5" stroke="#333" stroke-width="0.9"/><path d="M15 4.5L22.5 12L24.5 9.5Q25.5 6 22.5 3.5Q19.5 1 17.5 2Z" fill="#7a2818"/></svg>
<svg class="a" style="left:10px;top:752px" width="26" height="26" viewBox="0 0 26 26"><defs><linearGradient id="rg" x1="0" y1="0" x2="0" y2="1"><stop offset="0" stop-color="#4aa0f0"/><stop offset="1" stop-color="#1e70c8"/></linearGradient></defs><rect x="4" y="3" width="18" height="18" fill="url(#rg)"/></svg>
<svg class="a" style="left:10px;top:786px" width="26" height="26" viewBox="0 0 26 26"><text x="13" y="21.5" text-anchor="middle" font-family="Liberation Serif" font-size="24" fill="#bdbdbd">A</text></svg>
<svg class="a" style="left:10px;top:820px" width="26" height="26" viewBox="0 0 26 26"><path d="M5.5 2H17Q22 2 22.5 8Q23 15 21.5 21.5Q12 23 2.5 22Z" fill="#2c3444" stroke="#e0e0e0" stroke-width="1"/><path d="M4 11.5Q13 10 22.8 11M3 17Q12 16 22.3 16.5M9.5 2Q8 12 7 22.3M13.5 2Q13.5 12 12.5 22.5M17.5 2.2Q19 12 17.5 22.2" fill="none" stroke="#e0e0e0" stroke-width="0.9"/></svg>
<svg class="a" style="left:10px;top:853px" width="26" height="26" viewBox="0 0 26 26"><circle cx="10" cy="10" r="7.5" fill="#5aa8e8" stroke="#eee" stroke-width="1.5"/><circle cx="8" cy="8" r="3.5" fill="#a8d8f8"/><path d="M15.5 15.5L22 22" stroke="#e8902a" stroke-width="2.5"/></svg>
<div class="a" style="left:33px;top:365px;width:0;height:0;border-left:6px solid transparent;border-bottom:6px solid #e8e8e8"></div>
<div class="a" style="left:33px;top:466px;width:0;height:0;border-left:6px solid transparent;border-bottom:6px solid #e8e8e8"></div>
<div class="a" style="left:33px;top:535px;width:0;height:0;border-left:6px solid transparent;border-bottom:6px solid #e8e8e8"></div>
<div class="a" style="left:33px;top:569px;width:0;height:0;border-left:6px solid transparent;border-bottom:6px solid #e8e8e8"></div>
<div class="a" style="left:33px;top:671px;width:0;height:0;border-left:6px solid transparent;border-bottom:6px solid #e8e8e8"></div>
<div class="a" style="left:33px;top:705px;width:0;height:0;border-left:6px solid transparent;border-bottom:6px solid #e8e8e8"></div>
<div class="a" style="left:33px;top:739px;width:0;height:0;border-left:6px solid transparent;border-bottom:6px solid #e8e8e8"></div>
<div class="a" style="left:33px;top:773px;width:0;height:0;border-left:6px solid transparent;border-bottom:6px solid #e8e8e8"></div>
<div class="a" style="left:33px;top:807px;width:0;height:0;border-left:6px solid transparent;border-bottom:6px solid #e8e8e8"></div>
<div class="a" style="left:33px;top:841px;width:0;height:0;border-left:6px solid transparent;border-bottom:6px solid #e8e8e8"></div>
<div id="doctab" class="a"></div>
<div id="canvas" class="a"></div>
<div id="page" class="a"></div>
<div id="vscroll" class="a"></div>
<div id="hscroll" class="a"></div>
<!-- DOC TAB / CANVAS -->
<div class="t" style="left:61px;top:140px;font-size:13.9px;color:#f0f0f0">&lt;Untitled&gt; [Modified] (74.4%)</div>
<svg class="a" style="left:1496px;top:141px" width="12" height="11" viewBox="0 0 12 11"><path d="M1.5 0.5L11 10M11 0.5L1.5 10" stroke="#f0f0f0" stroke-width="1.4"/></svg>
<div class="a" style="left:1503px;top:450px;width:9px;height:241px;background:#858585;border-radius:4.5px"></div>
<div class="a" style="left:1503px;top:168px;width:0;height:0;border-left:4.5px solid transparent;border-right:4.5px solid transparent;border-bottom:8px solid #8a8a8a"></div>
<div class="a" style="left:1503px;top:962px;width:0;height:0;border-left:4.5px solid transparent;border-right:4.5px solid transparent;border-top:8px solid #8a8a8a"></div>
<div class="a" style="left:572px;top:983px;width:444px;height:9px;background:#858585;border-radius:4.5px"></div>
<div class="a" style="left:55px;top:983px;width:0;height:0;border-top:4.5px solid transparent;border-bottom:4.5px solid transparent;border-right:8px solid #8a8a8a"></div>
<div class="a" style="left:1481px;top:984px;width:0;height:0;border-top:4.5px solid transparent;border-bottom:4.5px solid transparent;border-left:8px solid #8a8a8a"></div>
<svg class="a" style="left:0;top:0" width="1496" height="977" viewBox="0 0 1496 977">
 <defs><clipPath id="pg"><rect x="257" y="282" width="951" height="570"/></clipPath></defs>
 <g clip-path="url(#pg)" fill="none" stroke="#000" stroke-width="24" stroke-linecap="round" stroke-linejoin="round">
  <path id="F1" d="M312.5 494V386H384M312.5 440.5H373"/>
  <path d="M534.7 494V386H606.4M534.7 440.5H596"/>
  <path d="M645.1 494V386H717M645.1 440.5H706"/>
  <path d="M1009.5 494V387H1080.7M1009.5 440.5H1070.7"/>
  <path id="S1" d="M486 395C474 389 462 384.5 450 384.5C430 384.5 417.5 396 417.5 412C417.5 428 432 435 455 441C478 447 492.5 455 492.5 470C492.5 487 477 498 455 498C440 498 428 492 414 483"/>
  <use href="#S1" x="332"/>
  <use href="#S1" x="697.5"/>
  <path d="M868 387H912A53.5 53.5 0 0 1 912 494.5H868Z"/>
 </g>
 <g fill="none" stroke="#3d86e0" stroke-width="1.2">
  <rect x="300.5" y="373.5" width="1042.5" height="137.5"/>
  <path d="M821.5 373V341" stroke-width="1"/>
 </g>
 <defs><linearGradient id="hg" x1="0" y1="0" x2="1" y2="1"><stop offset="0" stop-color="#4a94e8"/><stop offset="1" stop-color="#1a62c4"/></linearGradient></defs>
 <g fill="url(#hg)" stroke="#ececec" stroke-width="2">
  <circle cx="300.5" cy="373.3" r="5.2"/><circle cx="821.5" cy="373.3" r="5.2"/><circle cx="1343" cy="373.3" r="5.2"/>
  <circle cx="300.5" cy="442" r="5.2"/><circle cx="1343" cy="442" r="5.2"/>
  <circle cx="300.5" cy="511" r="5.2"/><circle cx="821.5" cy="511" r="5.2"/><circle cx="1343" cy="511" r="5.2"/>
 </g>
 <circle cx="821.5" cy="335.3" r="5.5" fill="#eaf2fc" stroke="#3d8ae4" stroke-width="1.9"/>
</svg>

<div id="status" class="a"></div>
<div id="taskbar" class="a"></div>
<div id="rpanel" class="a"></div>
<!-- RIGHT PANEL -->
<div class="a" style="left:1520px;top:131px;width:400px;height:30px;background:#282828"></div>
<div class="a" style="left:1530px;top:141px;width:1px;height:10px;background:#6a6a6a"></div>
<div class="a" style="left:1543px;top:133px;width:51px;height:28px;background:#3c3c3c"></div>
<div class="t" style="left:1549px;top:138px;font-size:13.3px;color:#f0f0f0">Layers</div>
<svg class="a" style="left:1899px;top:140px" width="16" height="14" viewBox="0 0 16 14"><path d="M0 1.5H10M0 4H10M0 6.5H10M0 9H10" stroke="#e0e0e0" stroke-width="1.3"/><path d="M11 11H15L13 13Z" fill="#e0e0e0"/></svg>
<div class="a" style="left:1520px;top:161px;width:400px;height:36px;background:#3c3c3c"></div>
<div class="t" style="left:1530px;top:172px;font-size:12.6px;color:#f0f0f0">Opacity:</div>
<div class="cb" style="left:1580px;top:166px;width:94px;height:25px;background:#2a2a2a;border-color:#333"></div>
<div class="t" style="left:1588px;top:172px;font-size:13.6px;color:#f4f4f4">100 %</div>
<div class="arr" style="left:1661px;top:176px"></div>
<div class="cb" style="left:1680px;top:167px;width:178px;height:24px;background:#353535;border-color:#2a2a2a"></div>
<div class="t" style="left:1686px;top:172px;font-size:14px;color:#f4f4f4">Normal</div>
<div class="arr" style="left:1845px;top:177px"></div>
<svg class="a" style="left:1864px;top:170px" width="16" height="16" viewBox="0 0 16 16"><g fill="#b0b0b0"><circle cx="8" cy="8" r="5.5"/><rect x="6.5" y="0" width="3" height="16"/><rect x="0" y="6.5" width="16" height="3"/><rect x="6.5" y="0" width="3" height="16" transform="rotate(45 8 8)"/><rect x="6.5" y="0" width="3" height="16" transform="rotate(-45 8 8)"/></g><circle cx="8" cy="8" r="2.5" fill="#3c3c3c"/></svg>
<svg class="a" style="left:1893px;top:169px" width="14" height="17" viewBox="0 0 14 17"><path d="M3 7V4.5A4 4 0 0 1 11 4.5V7" fill="none" stroke="#a8a8a8" stroke-width="2"/><rect x="1.5" y="7" width="11" height="9" rx="1" fill="#a8a8a8"/></svg>
<div class="a" style="left:1520px;top:197px;width:400px;height:450px;background:#333"></div>
<div class="a" style="left:1520px;top:197px;width:378px;height:83px;background:#6390cf;border-bottom:1px solid #111"></div>
<div class="a" style="left:1546px;top:198px;width:80px;height:80px;background:#262626;border:1px solid #000"></div>
<div class="t" style="left:1575px;top:220px;font-family:'Liberation Serif',serif;font-size:31px;color:#8c8c8c">A</div>
<div class="t" style="left:1631px;top:230px;font-size:14px;color:#dde4f0">(fsffsdfsd)</div>
<div class="a" style="left:1879px;top:231px;width:15px;height:15px;border:1px solid #b8cae4;border-radius:2px"></div>
<svg class="a" style="left:1881px;top:233px" width="11" height="11" viewBox="0 0 11 11"><path d="M1.5 5.5L4 9L9.5 1.5" fill="none" stroke="#c8d8ee" stroke-width="1.3"/></svg>

<div class="a" style="left:1520px;top:647px;width:400px;height:27px;background:#3c3c3c"></div>
<div class="a" style="left:1526px;top:648px;width:26px;height:25px;background:#262626"></div>
<svg class="a" style="left:1529px;top:651px" width="20" height="18" viewBox="0 0 20 18"><path d="M1 2H19V4.5L10 9L1 4.5Z" fill="#b4b4b4"/><path d="M1 8.5L10 13L19 8.5M1 12.5L10 17L19 12.5" fill="none" stroke="#b4b4b4" stroke-width="2.2"/></svg>
<svg class="a" style="left:1703px;top:653px" width="18" height="16" viewBox="0 0 18 16"><path d="M0 0H18V16H0ZM9 3.5A4.5 4.5 0 1 0 9 12.5A4.5 4.5 0 1 0 9 3.5Z" fill="#aaa" fill-rule="evenodd"/></svg>
<svg class="a" style="left:1732px;top:653px" width="16" height="16" viewBox="0 0 16 16"><circle cx="8" cy="8" r="7" fill="none" stroke="#aaa" stroke-width="1.5"/><path d="M11 2L5 14A7 7 0 0 1 11 2Z" fill="#aaa"/><path d="M8 1A7 7 0 0 0 4 14L11 2Z" fill="#aaa"/></svg>
<div class="t" style="left:1759px;top:649px;font-family:'Liberation Serif',serif;font-style:italic;font-size:18px;letter-spacing:1px;color:#aaa">fx</div>
<svg class="a" style="left:1788px;top:653px" width="15" height="16" viewBox="0 0 15 16"><path d="M0 0H15V2L9 8L15 14V16H0V14L6 8L0 2Z" fill="#aaa"/></svg>
<svg class="a" style="left:1836px;top:654px" width="19" height="15" viewBox="0 0 19 15"><path d="M0 1H7L8.5 2.5H19V15H0Z" fill="#aaa"/><path d="M0 4H19" stroke="#3c3c3c" stroke-width="1"/></svg>
<svg class="a" style="left:1867px;top:653px" width="14" height="16" viewBox="0 0 14 16"><rect width="14" height="16" fill="#aaa"/><g fill="#3c3c3c"><rect x="2" y="2" width="2.5" height="2.5"/><rect x="7" y="2" width="2.5" height="2.5"/><rect x="4.5" y="4.5" width="2.5" height="2.5"/><rect x="9.5" y="4.5" width="2.5" height="2.5"/><rect x="2" y="7" width="2.5" height="2.5"/><rect x="7" y="7" width="2.5" height="2.5"/><rect x="4.5" y="9.5" width="2.5" height="2.5"/><rect x="9.5" y="9.5" width="2.5" height="2.5"/><rect x="2" y="12" width="2.5" height="2"/><rect x="7" y="12" width="2.5" height="2"/></g></svg>
<svg class="a" style="left:1896px;top:652px" width="12" height="17" viewBox="0 0 15 19"><rect x="0" y="2.5" width="15" height="2" fill="#aaa"/><rect x="5" y="0" width="5" height="2.5" fill="#aaa"/><path d="M1.5 5.5H13.5V19H1.5ZM4 7V17M7.5 7V17M11 7V17" fill="#aaa" stroke="#3c3c3c" stroke-width="1.2"/></svg>

<div class="a" style="left:1520px;top:674px;width:400px;height:30px;background:#262626"></div>
<div class="a" style="left:1530px;top:684px;width:1px;height:10px;background:#6a6a6a"></div>
<div class="t" style="left:1549px;top:681px;font-size:13.2px;color:#c4c4c4">Brushes</div>
<div class="a" style="left:1603px;top:676px;width:44px;height:28px;background:#3c3c3c"></div>
<div class="t" style="left:1608px;top:681px;font-size:13.7px;color:#f0f0f0">Color</div>
<svg class="a" style="left:1899px;top:683px" width="16" height="14" viewBox="0 0 16 14"><path d="M0 1.5H10M0 4H10M0 6.5H10M0 9H10" stroke="#e0e0e0" stroke-width="1.3"/><path d="M11 11H15L13 13Z" fill="#e0e0e0"/></svg>

<div class="a" style="left:1520px;top:704px;width:400px;height:295px;background:#3c3c3c"></div>
<svg class="a" style="left:1530px;top:715px" width="120" height="65" viewBox="1530 715 120 65">
 <defs><clipPath id="fgc"><circle cx="1554.5" cy="740" r="13.5"/></clipPath><clipPath id="nc"><circle cx="1548" cy="764" r="6"/></clipPath></defs>
 <circle cx="1554.5" cy="740" r="15" fill="#464646"/>
 <circle cx="1554.5" cy="740" r="13.5" fill="#fff"/>
 <path d="M1544 750L1564 730" stroke="#ff2020" stroke-width="3.2" clip-path="url(#fgc)"/>
 <circle cx="1570" cy="756" r="16" fill="#464646"/>
 <circle cx="1570" cy="756" r="14" fill="#000"/>
 <circle cx="1548" cy="764" r="7.5" fill="#111"/>
 <circle cx="1548" cy="764" r="6" fill="#fff"/>
 <path d="M1543 769L1553 759" stroke="#f02020" stroke-width="1.5" clip-path="url(#nc)"/>
 <path d="M1572 729Q1580 726 1583 737" fill="none" stroke="#d0d0d0" stroke-width="1.3"/>
 <path d="M1570 731L1573 727L1575 732M1580 735L1583 739L1586 735" fill="none" stroke="#d0d0d0" stroke-width="1.2"/>
 <path d="M1598 745L1608 735L1610 737L1600 747Z" fill="#909090"/><path d="M1598 745L1599 744L1600 747Z" fill="#ccc"/>
 <path d="M1606 733L1613 740L1615 738L1608 731Z" fill="#9a7030"/>
 <circle cx="1615" cy="729" r="4.5" fill="#c0903a"/>
 <circle cx="1631.5" cy="733" r="9.5" fill="#333"/>
 <circle cx="1631.5" cy="733" r="8" fill="#f00"/>
</svg>
<div class="a" style="left:1627px;top:749px;width:186px;height:186px;border-radius:50%;background:conic-gradient(from 90deg,#f00,#ff0 60deg,#0f0 120deg,#0ff 180deg,#00f 240deg,#f0f 300deg,#f00 360deg)"></div>
<div class="a" style="left:1646px;top:768px;width:148px;height:148px;border-radius:50%;background:#3c3c3c"></div>
<svg class="a" style="left:1620px;top:740px" width="200" height="200" viewBox="1620 740 200 200">
 <defs>
  <linearGradient id="tv" x1="0" y1="0" x2="0" y2="1" gradientUnits="objectBoundingBox"><stop offset="0" stop-color="#000"/><stop offset="1" stop-color="#fff"/></linearGradient>
  <linearGradient id="th" x1="0" y1="0" x2="1" y2="0"><stop offset="0" stop-color="#fff"/><stop offset="1" stop-color="#000"/></linearGradient>
  <mask id="tm"><rect x="1682" y="778" width="114" height="129" fill="url(#th)"/></mask>
 </defs>
 <path d="M1683 778L1796 842L1683 907Z" fill="#e01010"/>
 <path d="M1683 778L1796 842L1683 907Z" fill="url(#tv)" mask="url(#tm)"/>
 <circle cx="1681" cy="776.5" r="5.5" fill="#000" stroke="#fff" stroke-width="2"/>
 <circle cx="1803" cy="841.5" r="6" fill="#f00" stroke="#fff" stroke-width="2"/>
</svg>
<div class="t" style="left:1532px;top:893px;font-size:12px;color:#e8e8e8">H: 0</div>
<div class="t" style="left:1535px;top:910px;font-size:12px;color:#e8e8e8">S: 0</div>
<div class="t" style="left:1535px;top:927px;font-size:12px;color:#e8e8e8">L: 0</div>
<div class="t" style="left:1537px;top:948px;font-size:12.5px;color:#e8e8e8">Opacity</div>
<div class="a" style="left:1542px;top:968px;width:19px;height:19px;border-radius:50%;background:#000;border:1.5px solid #333"></div>
<div class="a" style="left:1569px;top:973px;width:246px;height:10px;border-radius:5px;background:linear-gradient(90deg,#f4f4f4,#9a9a9a 50%,#2e2e2e);"></div>
<div class="a" style="left:1569px;top:973px;width:246px;height:10px;border-radius:5px;opacity:0.35;background-image:linear-gradient(45deg,#666 25%,transparent 25%,transparent 75%,#666 75%),linear-gradient(45deg,#666 25%,transparent 25%,transparent 75%,#666 75%);background-size:8px 8px;background-position:0 0,4px 4px"></div>
<div class="a" style="left:1806px;top:971px;width:15px;height:15px;border-radius:50%;background:#333;border:2px solid #e0e0e0"></div>
<div class="cb" style="left:1827px;top:965px;width:75px;height:24px;background:#2a2a2a;border-color:#2f2f2f"><div class="dd" style="width:19px;background:#353535;border-color:#2a2a2a"></div></div>
<div class="t" style="left:1835px;top:970px;font-size:13.5px;color:#f0f0f0">100 %</div>
<div class="arr" style="left:1888px;top:975px"></div>



<!-- TOP LINES & WINDOW CONTROLS -->
<div class="a" style="left:809px;top:0;width:60px;height:1px;background:#1f7ad0"></div>
<div class="a" style="left:869px;top:0;width:241px;height:1px;background:#1c1c1c"></div>
<div class="a" style="left:1823px;top:19px;width:12px;height:3px;background:#f0f0f0"></div>
<svg class="a" style="left:1858px;top:11px" width="13" height="13" viewBox="0 0 13 13"><path d="M3.5 3.5V1H12V9.5H9.5M1 3.5H9.5V12H1Z" fill="none" stroke="#f0f0f0" stroke-width="1.6"/></svg>
<svg class="a" style="left:1894px;top:12px" width="13" height="12" viewBox="0 0 13 12"><path d="M1 0.5L12 11.5M12 0.5L1 11.5" stroke="#f0f0f0" stroke-width="1.6"/></svg>

<!-- STATUS BAR -->
<div class="t" style="left:22px;top:1009px;font-size:13.8px;letter-spacing:0.45px;color:#c4c4c4">'fsffsdfsd' selected. <b style="color:#fff">Drag</b> to move selection. <b style="color:#fff">Click</b> another object to select it. <b style="color:#fff">Click</b> on an empty area to deselect selection.</div>

<!-- TASKBAR -->
<div class="a" style="left:60px;top:1030px;width:430px;height:50px;background:#333;border:1px solid #5a5a5a;border-bottom:none;border-right:1px solid #444"></div>
<svg class="a" style="left:20px;top:1045px" width="20" height="20" viewBox="0 0 20 20"><path d="M0 2.8L8.2 1.6V9.5H0ZM9.3 1.45L20 0V9.5H9.3ZM0 10.5H8.2V18.4L0 17.2ZM9.3 10.5H20V20L9.3 18.55Z" fill="#fff"/></svg>
<svg class="a" style="left:75px;top:1045px" width="20" height="20" viewBox="0 0 20 20"><circle cx="12" cy="8" r="6.5" fill="none" stroke="#e8e8e8" stroke-width="1.4"/><path d="M7.3 12.7L1 19" stroke="#e8e8e8" stroke-width="1.6"/></svg>
<div class="t" style="left:110px;top:1045.5px;font-size:17.8px;letter-spacing:0.38px;color:#e4e4e4">Type here to search</div>
<svg class="a" style="left:509px;top:1044px" width="23" height="21" viewBox="0 0 23 21"><path d="M1 0.5H13M1 20.5H13M2.5 3.5H11.5V17.5H2.5Z" fill="none" stroke="#f0f0f0" stroke-width="1.3"/><path d="M19 0V7M19 14V21" stroke="#f0f0f0" stroke-width="1.3"/><rect x="17.5" y="8.5" width="3" height="4" fill="#f0f0f0"/></svg>
<svg class="a" style="left:570px;top:1043px" width="28" height="24" viewBox="0 0 28 24"><path d="M0 2Q0 0 2 0H9L12 2H26Q28 2 28 4V22Q28 24 26 24H2Q0 24 0 22Z" fill="#f4c84a"/><path d="M0 5H28V22Q28 24 26 24H2Q0 24 0 22Z" fill="#ffd766"/><path d="M0 2Q0 0 2 0H9L12 3H0Z" fill="#e8a820"/><path d="M6 24V15Q6 12 9 12H19Q22 12 22 15V24H18V17H10V24Z" fill="#3d8fd8"/></svg>
<div class="a" style="left:559px;top:1077px;width:51px;height:3px;background:#76b9ed"></div>
<svg class="a" style="left:631px;top:1041px" width="30" height="28" viewBox="0 0 30 28"><path d="M0 9L15 0L30 9Z" fill="#0b60b6"/><path d="M0 9L15 17.5L30 28H0Z" fill="#1e92e2"/><path d="M15 17.5L30 9V28Z" fill="#38c0f2"/><path d="M3 9.3H27L15 17Z" fill="#f2f2f2"/><rect x="0" y="8.5" width="30" height="1" fill="#0a4a90"/></svg>
<svg class="a" style="left:692px;top:1040px" width="31" height="31" viewBox="0 0 31 31"><defs><linearGradient id="eg2" x1="0" y1="0.2" x2="1" y2="0.6"><stop offset="0" stop-color="#1a8ce0"/><stop offset="0.5" stop-color="#2cbcd8"/><stop offset="1" stop-color="#70e050"/></linearGradient></defs><circle cx="15.5" cy="15.5" r="15" fill="url(#eg2)"/><path d="M1 15.5C1 10 4 6.5 9 5.5C5 9 4.5 14 5.5 19C6.5 25 10 29 15.5 30.5C7 30.5 1 24 1 15.5Z" fill="#1d84d8"/><path d="M6 12C9 7.5 14 8 11.5 14.5C11 18 14 20.5 18 20.8C22 21.2 26 21.5 28.8 21.5C26.5 27 21 30.5 15.5 30.5C10 30.5 6 26 5.5 20C5.3 17 5.5 14 6 12Z" fill="#0e5cac"/><circle cx="14.8" cy="14.6" r="3.3" fill="#1b2533"/><path d="M17.5 17.8C21 19.6 25 20 29.8 18.8L29.2 21.2C25 21.8 21 21.3 17.6 20Z" fill="#1b2533"/></svg>
<div class="a" style="left:683px;top:1077px;width:51px;height:3px;background:#76b9ed"></div>
<div class="a" style="left:756px;top:1041px;width:28px;height:28px;background:#001e36;border-radius:4px"></div>
<div class="t" style="left:759px;top:1044px;font-size:17px;font-weight:bold;color:#31a8ff">Ps</div>
<div class="a" style="left:745px;top:1077px;width:51px;height:3px;background:#76b9ed"></div>
<div class="a" style="left:802px;top:1030px;width:61px;height:50px;background:#3a4652"></div>
<svg class="a" style="left:817px;top:1040px" width="30" height="30" viewBox="0 0 30 30"><rect width="30" height="30" fill="url(#lg1)"/><path d="M0 0H12.3L0 21Z" fill="#7b4fdc"/><path d="M12.3 0.5L19 14M28.7 0.2L17.5 19.2M6.3 10.5H16M12.2 11L1.2 30M10.7 15.8L18.7 30M13.3 19.2H30" stroke="#7a40c8" stroke-width="1.1" fill="none"/></svg>
<div class="a" style="left:802px;top:1077px;width:61px;height:3px;background:#76b9ed"></div>

<svg class="a" style="left:1429px;top:1045px" width="28" height="22" viewBox="0 0 28 22"><path d="M6 17A5 5 0 0 1 5 7A7 7 0 0 1 18 5A6 6 0 0 1 23 17Z" fill="#d8eaf8"/><path d="M8 10A6 6 0 0 1 18 8" stroke="#fff" stroke-width="2" fill="none"/><path d="M14 15Q12 18 14 20Q16 18 14 15Z" fill="#3a90e0"/></svg>
<div class="t" style="left:1467px;top:1046.5px;font-size:18.6px;letter-spacing:-0.35px;color:#f0f0f0">27°C&nbsp; Hujan ringan</div>
<svg class="a" style="left:1638px;top:1049px" width="18" height="10" viewBox="0 0 18 10"><path d="M1 9.5L9 1.5L17 9.5" fill="none" stroke="#f0f0f0" stroke-width="1.5"/></svg>
<svg class="a" style="left:1666px;top:1047px" width="22" height="14" viewBox="0 0 22 14"><rect x="5" y="3" width="15" height="9" fill="none" stroke="#f0f0f0" stroke-width="1.2"/><rect x="7" y="5" width="8" height="5" fill="#f0f0f0"/><rect x="20" y="5.5" width="1.5" height="4" fill="#f0f0f0"/><path d="M2 4V1M4 4V1M1 4H5V6L3 8V11" fill="none" stroke="#f0f0f0" stroke-width="1"/></svg>
<svg class="a" style="left:1700px;top:1045px" width="17" height="17" viewBox="0 0 17 17"><path d="M1 16A15 15 0 0 1 16 1M4 16A12 12 0 0 1 16 4M7 16A9 9 0 0 1 16 7M10 16A6 6 0 0 1 16 10" fill="none" stroke="#e8e8e8" stroke-width="1"/><circle cx="14.5" cy="14.5" r="1.8" fill="#fff"/></svg>
<svg class="a" style="left:1732px;top:1044px" width="21" height="21" viewBox="0 0 21 21"><path d="M16 1L19 4L8 15L4 17L6 13Z" fill="none" stroke="#f0f0f0" stroke-width="1.3"/><path d="M6 13A4 4 0 1 0 3 19M15 6Q21 8 17 12" fill="none" stroke="#f0f0f0" stroke-width="1.2"/></svg>
<div class="t" style="left:1788px;top:1035px;font-size:15.2px;color:#f0f0f0">15:25</div>
<div class="t" style="left:1769px;top:1058.5px;font-size:15.2px;color:#f0f0f0">24/12/2021</div>
<svg class="a" style="left:1866px;top:1042px" width="34" height="34" viewBox="0 0 34 34"><path d="M3 2H22V16H10L7 19V16H3Z" fill="#f4f4f4"/><path d="M6 6H19M6 9H19M6 12H15" stroke="#555" stroke-width="1"/><circle cx="22" cy="22" r="9.5" fill="#1b2533" stroke="#8a8a8a" stroke-width="1.3"/><text x="22" y="27" text-anchor="middle" font-family="Liberation Sans" font-size="13" fill="#fff">1</text></svg>
<div class="a" style="left:1913px;top:1031px;width:1px;height:49px;background:#5a6470"></div>

</body></html>
